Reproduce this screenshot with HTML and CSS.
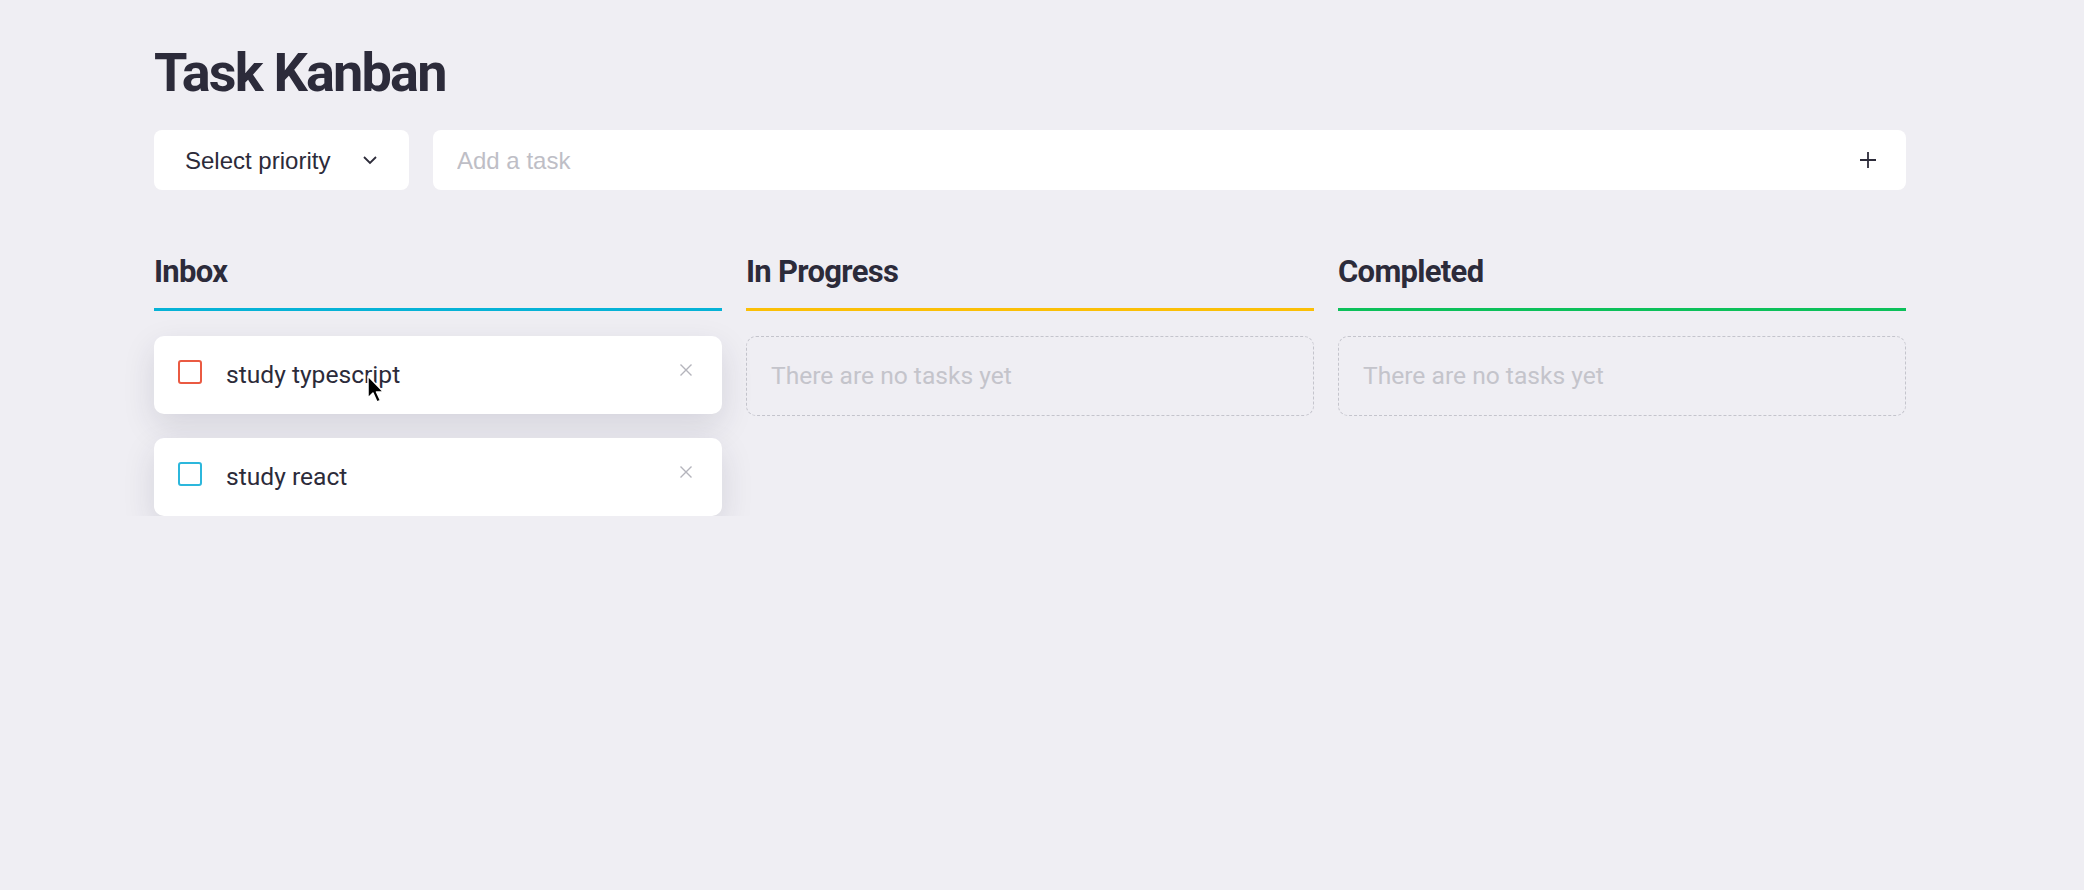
FILE: index.html
```html
<!DOCTYPE html>
<html lang="en">
<head>
    <meta charset="utf-8">
    <title>Task Kanban</title>
    <meta name="viewport" content="width=device-width,initial-scale=1.0">
    <link rel="stylesheet" href="styles.css">
</head>
<body>
    <main class="board">
        <h1 class="board-title">Task Kanban</h1>

        <form class="toolbar">
            <button type="button" class="priority">
                <span>Select priority</span>
                <svg width="16" height="16" viewBox="0 0 16 16">
                    <path d="M2 5 L8 11 L14 5" fill="none" stroke="#2d2c3a" stroke-width="1.8"/>
                </svg>
            </button>
            <div class="add-task">
                <input type="text" placeholder="Add a task">
                <button type="submit" class="add-btn" aria-label="Add">
                    <svg width="16" height="16" viewBox="0 0 16 16">
                        <path d="M8 0 V16 M0 8 H16" stroke="#2d2c3a" stroke-width="1.8"/>
                    </svg>
                </button>
            </div>
        </form>

        <section class="columns">
            <div class="column">
                <h2 class="column-title inbox">Inbox</h2>
                <ul class="tasks">
                    <li class="task">
                        <span class="check high"></span>
                        <span class="task-text">study typescript</span>
                        <button class="remove" aria-label="Remove">
                            <svg width="12" height="12" viewBox="0 0 12 12">
                                <path d="M0.5 0.5 L11.5 11.5 M11.5 0.5 L0.5 11.5" stroke="#b4b4bc" stroke-width="1.4"/>
                            </svg>
                        </button>
                        <!-- mouse pointer in the capture -->
                        <svg class="pointer" width="20" height="30" viewBox="0 0 20 30">
                            <path d="M1 1 V23 L6 18 L10 27 L13.5 25.5 L9.5 17 H16.5 Z" fill="#000" stroke="#fff" stroke-width="1.5" stroke-linejoin="round"/>
                        </svg>
                    </li>
                    <li class="task">
                        <span class="check low"></span>
                        <span class="task-text">study react</span>
                        <button class="remove" aria-label="Remove">
                            <svg width="12" height="12" viewBox="0 0 12 12">
                                <path d="M0.5 0.5 L11.5 11.5 M11.5 0.5 L0.5 11.5" stroke="#b4b4bc" stroke-width="1.4"/>
                            </svg>
                        </button>
                    </li>
                </ul>
            </div>
            <div class="column">
                <h2 class="column-title progress">In Progress</h2>
                <div class="empty">There are no tasks yet</div>
            </div>
            <div class="column">
                <h2 class="column-title completed">Completed</h2>
                <div class="empty">There are no tasks yet</div>
            </div>
        </section>
    </main>
</body>
</html>
```

FILE: styles.css
```css
body {
    margin: 0;
    background: #efeef3;
    color: #2c2b3a;
    font-family: Roboto, "Noto Sans", sans-serif;
}

.board {
    width: 1752px;
    margin: 0 0 0 154px;
    padding-top: 46px;
}

.board-title {
    margin: 0;
    font-size: 54px;
    line-height: 1;
    font-weight: 700;
    letter-spacing: -1.8px;
}

.toolbar {
    display: flex;
    gap: 24px;
    margin-top: 30px;
    height: 60px;
}

.priority {
    width: 255px;
    display: flex;
    align-items: center;
    justify-content: space-between;
    padding: 2px 31px 0;
    border: none;
    border-radius: 8px;
    background: #fff;
    color: #2c2b3a;
    font-family: "Liberation Sans", Arial, sans-serif;
    font-size: 24px;
}

.priority svg {
    display: block;
    margin-top: -2px;
}

.add-task {
    flex: 1;
    display: flex;
    align-items: center;
    background: #fff;
    border-radius: 8px;
    padding: 0 30px 0 24px;
}

.add-task input {
    flex: 1;
    border: none;
    outline: none;
    padding: 2px 0 0;
    font-family: "Liberation Sans", Arial, sans-serif;
    font-size: 24px;
    color: #2c2b3a;
    background: transparent;
}

.add-task input::placeholder {
    color: #bebec6;
}

.add-btn {
    border: none;
    background: none;
    padding: 0;
    display: flex;
}

.columns {
    display: grid;
    grid-template-columns: repeat(3, 1fr);
    gap: 24px;
    margin-top: 66px;
}

.column-title {
    margin: 0;
    font-size: 31px;
    line-height: 1;
    font-weight: 700;
    letter-spacing: -0.7px;
    padding-bottom: 21px;
    border-bottom: 3px solid;
}

.column-title.inbox {
    border-color: #06b2d6;
}

.column-title.progress {
    border-color: #fbbf06;
}

.column-title.completed {
    border-color: #0cc05a;
}

.tasks {
    list-style-type: none;
    margin: 25px 0 0;
    padding: 0;
    display: flex;
    flex-direction: column;
    gap: 24px;
}

.task {
    position: relative;
    display: flex;
    align-items: flex-start;
    gap: 24px;
    padding: 24px;
    background: #fff;
    border-radius: 10px;
    box-shadow: 0 12px 32px rgba(40, 40, 70, 0.13);
}

.check {
    width: 24px;
    height: 24px;
    box-sizing: border-box;
    border: 2px solid;
    border-radius: 3px;
}

.check.high {
    border-color: #ea5a42;
}

.check.low {
    border-color: #2cb7dc;
}

.task-text {
    flex: 1;
    font-size: 24.6px;
    line-height: 30px;
    color: #2c2b3a;
}

.remove {
    width: 24px;
    height: 20px;
    border: none;
    background: none;
    padding: 0;
    display: flex;
    align-items: center;
    justify-content: center;
}

.pointer {
    position: absolute;
    left: 213px;
    top: 39px;
}

.empty {
    margin-top: 25px;
    padding: 24px;
    border: 1px dashed #c4c4cc;
    border-radius: 10px;
    font-size: 24.6px;
    line-height: 30px;
    color: #c4c4cb;
}
```
